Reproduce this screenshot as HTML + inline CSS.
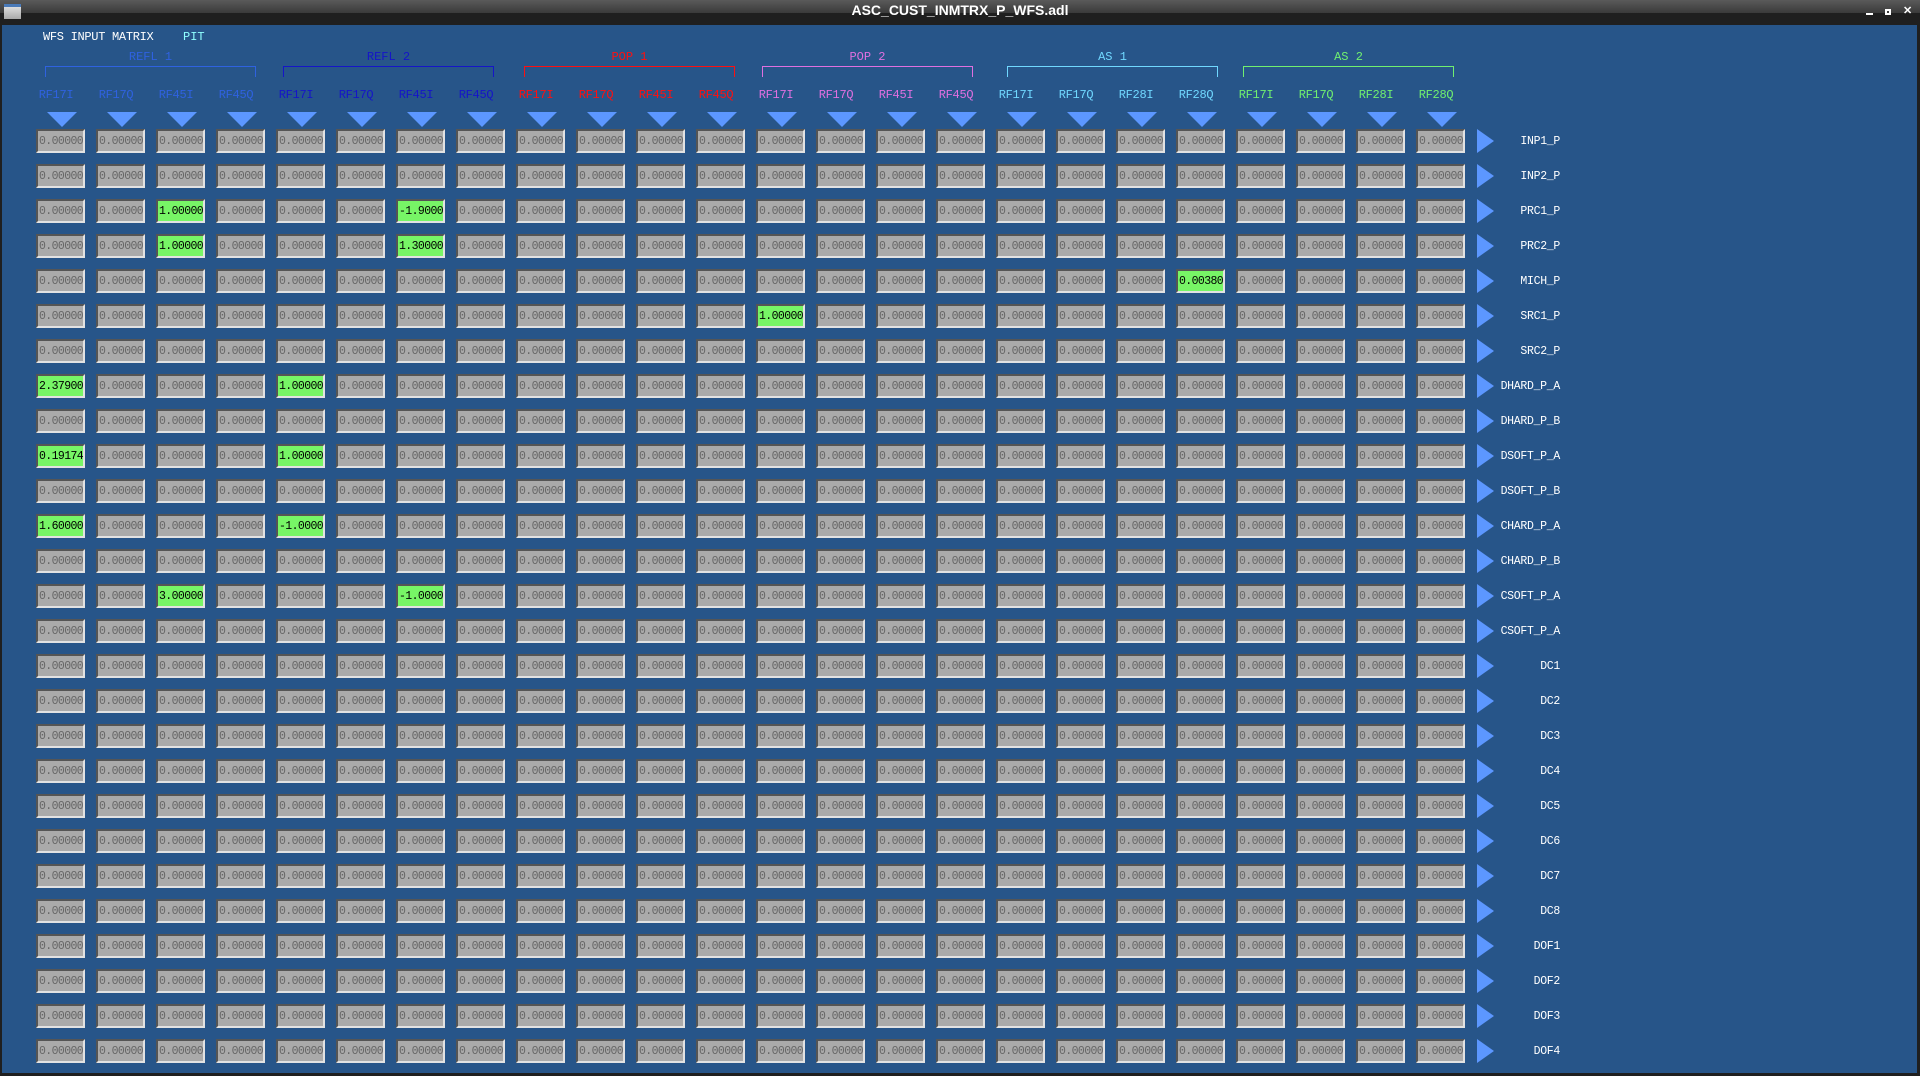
<!DOCTYPE html>
<html><head><meta charset="utf-8"><style>
*{margin:0;padding:0;box-sizing:border-box}
body{width:1920px;height:1076px;background:#1f1f1f;position:relative;overflow:hidden;font-family:"Liberation Mono","DejaVu Sans Mono",monospace;font-size:10px}
#tb{position:absolute;left:0;top:0;width:1920px;height:13px;background:linear-gradient(#5a5a5a,#3a3a3a)}
#tt{position:absolute;left:0;top:2px;width:1920px;text-align:center;color:#fff;font:bold 14px "Liberation Sans",sans-serif}
#ic{position:absolute;left:4px;top:4px;width:17px;height:15px;background:linear-gradient(#4a7ab8 0 3px,#ddd 3px,#aaa)}
.wbt{position:absolute;top:10px;background:#fff}
#bg{position:absolute;left:2px;top:25px;width:1915px;height:1048px;background:#275589}
.t{position:absolute;white-space:nowrap}
.br{position:absolute;top:66px;width:211px;height:11px;border:1px solid;border-bottom:none}
.gl{position:absolute;top:50px;width:211px;text-align:center;font-size:12px}
.cl{position:absolute;top:88px;width:60px;text-align:center;font-size:12px;letter-spacing:-0.3px}
.tri{position:absolute;top:112px;width:0;height:0;border-left:15px solid transparent;border-right:15px solid transparent;border-top:15px solid #5c97ff}
.r{position:absolute;left:36px;height:24px;width:1600px;display:flex;gap:11px}
.r i{display:block;font-style:normal;width:49px;height:24px;background:#aaa;border:2px solid;border-color:#555 #e2e2e2 #e2e2e2 #555;color:#666;padding:3px 0 0 1px;line-height:16px;font-size:11.5px;letter-spacing:-0.6px;flex:none;overflow:hidden;white-space:nowrap}
.r i.g{background:#77f566;color:#000}
.r b{position:absolute;left:1441px;top:0;width:0;height:0;border-top:12px solid transparent;border-bottom:12px solid transparent;border-left:17px solid #5c97ff}
.r u{position:absolute;right:76px;top:6px;text-decoration:none;color:#fff;font-size:11.5px;letter-spacing:-0.3px}
</style></head><body>
<div id="tb"></div><div id="ic"></div>
<div id="tt">ASC_CUST_INMTRX_P_WFS.adl</div>
<div class="wbt" style="left:1866px;top:13px;width:7px;height:2px"></div>
<div class="wbt" style="left:1885px;top:9px;width:6px;height:6px;background:none;border:2px solid #fff;border-top-width:2px"></div>
<div class="t" style="left:1903px;top:4px;color:#fff;font:bold 11px 'Liberation Sans',sans-serif">✕</div>
<div id="bg"></div>
<div class="t" style="left:43px;top:30px;color:#fff;font-size:12px;letter-spacing:-0.3px">WFS INPUT MATRIX</div>
<div class="t" style="left:183px;top:30px;color:#90ffff;font-size:12px">PIT</div>

<div class="gl" style="left:45px;color:#2f62e0">REFL 1</div><div class="br" style="left:45px;color:#2f62e0"></div>
<div class="gl" style="left:283px;color:#1515c8">REFL 2</div><div class="br" style="left:283px;color:#1515c8"></div>
<div class="gl" style="left:524px;color:#ff1010">POP 1</div><div class="br" style="left:524px;color:#ff1010"></div>
<div class="gl" style="left:762px;color:#e070e0">POP 2</div><div class="br" style="left:762px;color:#e070e0"></div>
<div class="gl" style="left:1007px;color:#70d8ff">AS 1</div><div class="br" style="left:1007px;color:#70d8ff"></div>
<div class="gl" style="left:1243px;color:#70f070">AS 2</div><div class="br" style="left:1243px;color:#70f070"></div>

<div class="cl" style="left:26px;color:#2f62e0">RF17I</div><div class="cl" style="left:86px;color:#2f62e0">RF17Q</div><div class="cl" style="left:146px;color:#2f62e0">RF45I</div><div class="cl" style="left:206px;color:#2f62e0">RF45Q</div>
<div class="cl" style="left:266px;color:#1515c8">RF17I</div><div class="cl" style="left:326px;color:#1515c8">RF17Q</div><div class="cl" style="left:386px;color:#1515c8">RF45I</div><div class="cl" style="left:446px;color:#1515c8">RF45Q</div>
<div class="cl" style="left:506px;color:#ff1010">RF17I</div><div class="cl" style="left:566px;color:#ff1010">RF17Q</div><div class="cl" style="left:626px;color:#ff1010">RF45I</div><div class="cl" style="left:686px;color:#ff1010">RF45Q</div>
<div class="cl" style="left:746px;color:#e070e0">RF17I</div><div class="cl" style="left:806px;color:#e070e0">RF17Q</div><div class="cl" style="left:866px;color:#e070e0">RF45I</div><div class="cl" style="left:926px;color:#e070e0">RF45Q</div>
<div class="cl" style="left:986px;color:#70d8ff">RF17I</div><div class="cl" style="left:1046px;color:#70d8ff">RF17Q</div><div class="cl" style="left:1106px;color:#70d8ff">RF28I</div><div class="cl" style="left:1166px;color:#70d8ff">RF28Q</div>
<div class="cl" style="left:1226px;color:#70f070">RF17I</div><div class="cl" style="left:1286px;color:#70f070">RF17Q</div><div class="cl" style="left:1346px;color:#70f070">RF28I</div><div class="cl" style="left:1406px;color:#70f070">RF28Q</div>

<div class="tri" style="left:47px"></div><div class="tri" style="left:107px"></div><div class="tri" style="left:167px"></div><div class="tri" style="left:227px"></div><div class="tri" style="left:287px"></div><div class="tri" style="left:347px"></div><div class="tri" style="left:407px"></div><div class="tri" style="left:467px"></div><div class="tri" style="left:527px"></div><div class="tri" style="left:587px"></div><div class="tri" style="left:647px"></div><div class="tri" style="left:707px"></div><div class="tri" style="left:767px"></div><div class="tri" style="left:827px"></div><div class="tri" style="left:887px"></div><div class="tri" style="left:947px"></div><div class="tri" style="left:1007px"></div><div class="tri" style="left:1067px"></div><div class="tri" style="left:1127px"></div><div class="tri" style="left:1187px"></div><div class="tri" style="left:1247px"></div><div class="tri" style="left:1307px"></div><div class="tri" style="left:1367px"></div><div class="tri" style="left:1427px"></div>

<div class="r" style="top:129px"><i>0.00000</i><i>0.00000</i><i>0.00000</i><i>0.00000</i><i>0.00000</i><i>0.00000</i><i>0.00000</i><i>0.00000</i><i>0.00000</i><i>0.00000</i><i>0.00000</i><i>0.00000</i><i>0.00000</i><i>0.00000</i><i>0.00000</i><i>0.00000</i><i>0.00000</i><i>0.00000</i><i>0.00000</i><i>0.00000</i><i>0.00000</i><i>0.00000</i><i>0.00000</i><i>0.00000</i><b></b><u>INP1_P</u></div>
<div class="r" style="top:164px"><i>0.00000</i><i>0.00000</i><i>0.00000</i><i>0.00000</i><i>0.00000</i><i>0.00000</i><i>0.00000</i><i>0.00000</i><i>0.00000</i><i>0.00000</i><i>0.00000</i><i>0.00000</i><i>0.00000</i><i>0.00000</i><i>0.00000</i><i>0.00000</i><i>0.00000</i><i>0.00000</i><i>0.00000</i><i>0.00000</i><i>0.00000</i><i>0.00000</i><i>0.00000</i><i>0.00000</i><b></b><u>INP2_P</u></div>
<div class="r" style="top:199px"><i>0.00000</i><i>0.00000</i><i class="g">1.00000</i><i>0.00000</i><i>0.00000</i><i>0.00000</i><i class="g">-1.9000</i><i>0.00000</i><i>0.00000</i><i>0.00000</i><i>0.00000</i><i>0.00000</i><i>0.00000</i><i>0.00000</i><i>0.00000</i><i>0.00000</i><i>0.00000</i><i>0.00000</i><i>0.00000</i><i>0.00000</i><i>0.00000</i><i>0.00000</i><i>0.00000</i><i>0.00000</i><b></b><u>PRC1_P</u></div>
<div class="r" style="top:234px"><i>0.00000</i><i>0.00000</i><i class="g">1.00000</i><i>0.00000</i><i>0.00000</i><i>0.00000</i><i class="g">1.30000</i><i>0.00000</i><i>0.00000</i><i>0.00000</i><i>0.00000</i><i>0.00000</i><i>0.00000</i><i>0.00000</i><i>0.00000</i><i>0.00000</i><i>0.00000</i><i>0.00000</i><i>0.00000</i><i>0.00000</i><i>0.00000</i><i>0.00000</i><i>0.00000</i><i>0.00000</i><b></b><u>PRC2_P</u></div>
<div class="r" style="top:269px"><i>0.00000</i><i>0.00000</i><i>0.00000</i><i>0.00000</i><i>0.00000</i><i>0.00000</i><i>0.00000</i><i>0.00000</i><i>0.00000</i><i>0.00000</i><i>0.00000</i><i>0.00000</i><i>0.00000</i><i>0.00000</i><i>0.00000</i><i>0.00000</i><i>0.00000</i><i>0.00000</i><i>0.00000</i><i class="g">0.00380</i><i>0.00000</i><i>0.00000</i><i>0.00000</i><i>0.00000</i><b></b><u>MICH_P</u></div>
<div class="r" style="top:304px"><i>0.00000</i><i>0.00000</i><i>0.00000</i><i>0.00000</i><i>0.00000</i><i>0.00000</i><i>0.00000</i><i>0.00000</i><i>0.00000</i><i>0.00000</i><i>0.00000</i><i>0.00000</i><i class="g">1.00000</i><i>0.00000</i><i>0.00000</i><i>0.00000</i><i>0.00000</i><i>0.00000</i><i>0.00000</i><i>0.00000</i><i>0.00000</i><i>0.00000</i><i>0.00000</i><i>0.00000</i><b></b><u>SRC1_P</u></div>
<div class="r" style="top:339px"><i>0.00000</i><i>0.00000</i><i>0.00000</i><i>0.00000</i><i>0.00000</i><i>0.00000</i><i>0.00000</i><i>0.00000</i><i>0.00000</i><i>0.00000</i><i>0.00000</i><i>0.00000</i><i>0.00000</i><i>0.00000</i><i>0.00000</i><i>0.00000</i><i>0.00000</i><i>0.00000</i><i>0.00000</i><i>0.00000</i><i>0.00000</i><i>0.00000</i><i>0.00000</i><i>0.00000</i><b></b><u>SRC2_P</u></div>
<div class="r" style="top:374px"><i class="g">2.37900</i><i>0.00000</i><i>0.00000</i><i>0.00000</i><i class="g">1.00000</i><i>0.00000</i><i>0.00000</i><i>0.00000</i><i>0.00000</i><i>0.00000</i><i>0.00000</i><i>0.00000</i><i>0.00000</i><i>0.00000</i><i>0.00000</i><i>0.00000</i><i>0.00000</i><i>0.00000</i><i>0.00000</i><i>0.00000</i><i>0.00000</i><i>0.00000</i><i>0.00000</i><i>0.00000</i><b></b><u>DHARD_P_A</u></div>
<div class="r" style="top:409px"><i>0.00000</i><i>0.00000</i><i>0.00000</i><i>0.00000</i><i>0.00000</i><i>0.00000</i><i>0.00000</i><i>0.00000</i><i>0.00000</i><i>0.00000</i><i>0.00000</i><i>0.00000</i><i>0.00000</i><i>0.00000</i><i>0.00000</i><i>0.00000</i><i>0.00000</i><i>0.00000</i><i>0.00000</i><i>0.00000</i><i>0.00000</i><i>0.00000</i><i>0.00000</i><i>0.00000</i><b></b><u>DHARD_P_B</u></div>
<div class="r" style="top:444px"><i class="g">0.19174</i><i>0.00000</i><i>0.00000</i><i>0.00000</i><i class="g">1.00000</i><i>0.00000</i><i>0.00000</i><i>0.00000</i><i>0.00000</i><i>0.00000</i><i>0.00000</i><i>0.00000</i><i>0.00000</i><i>0.00000</i><i>0.00000</i><i>0.00000</i><i>0.00000</i><i>0.00000</i><i>0.00000</i><i>0.00000</i><i>0.00000</i><i>0.00000</i><i>0.00000</i><i>0.00000</i><b></b><u>DSOFT_P_A</u></div>
<div class="r" style="top:479px"><i>0.00000</i><i>0.00000</i><i>0.00000</i><i>0.00000</i><i>0.00000</i><i>0.00000</i><i>0.00000</i><i>0.00000</i><i>0.00000</i><i>0.00000</i><i>0.00000</i><i>0.00000</i><i>0.00000</i><i>0.00000</i><i>0.00000</i><i>0.00000</i><i>0.00000</i><i>0.00000</i><i>0.00000</i><i>0.00000</i><i>0.00000</i><i>0.00000</i><i>0.00000</i><i>0.00000</i><b></b><u>DSOFT_P_B</u></div>
<div class="r" style="top:514px"><i class="g">1.60000</i><i>0.00000</i><i>0.00000</i><i>0.00000</i><i class="g">-1.0000</i><i>0.00000</i><i>0.00000</i><i>0.00000</i><i>0.00000</i><i>0.00000</i><i>0.00000</i><i>0.00000</i><i>0.00000</i><i>0.00000</i><i>0.00000</i><i>0.00000</i><i>0.00000</i><i>0.00000</i><i>0.00000</i><i>0.00000</i><i>0.00000</i><i>0.00000</i><i>0.00000</i><i>0.00000</i><b></b><u>CHARD_P_A</u></div>
<div class="r" style="top:549px"><i>0.00000</i><i>0.00000</i><i>0.00000</i><i>0.00000</i><i>0.00000</i><i>0.00000</i><i>0.00000</i><i>0.00000</i><i>0.00000</i><i>0.00000</i><i>0.00000</i><i>0.00000</i><i>0.00000</i><i>0.00000</i><i>0.00000</i><i>0.00000</i><i>0.00000</i><i>0.00000</i><i>0.00000</i><i>0.00000</i><i>0.00000</i><i>0.00000</i><i>0.00000</i><i>0.00000</i><b></b><u>CHARD_P_B</u></div>
<div class="r" style="top:584px"><i>0.00000</i><i>0.00000</i><i class="g">3.00000</i><i>0.00000</i><i>0.00000</i><i>0.00000</i><i class="g">-1.0000</i><i>0.00000</i><i>0.00000</i><i>0.00000</i><i>0.00000</i><i>0.00000</i><i>0.00000</i><i>0.00000</i><i>0.00000</i><i>0.00000</i><i>0.00000</i><i>0.00000</i><i>0.00000</i><i>0.00000</i><i>0.00000</i><i>0.00000</i><i>0.00000</i><i>0.00000</i><b></b><u>CSOFT_P_A</u></div>
<div class="r" style="top:619px"><i>0.00000</i><i>0.00000</i><i>0.00000</i><i>0.00000</i><i>0.00000</i><i>0.00000</i><i>0.00000</i><i>0.00000</i><i>0.00000</i><i>0.00000</i><i>0.00000</i><i>0.00000</i><i>0.00000</i><i>0.00000</i><i>0.00000</i><i>0.00000</i><i>0.00000</i><i>0.00000</i><i>0.00000</i><i>0.00000</i><i>0.00000</i><i>0.00000</i><i>0.00000</i><i>0.00000</i><b></b><u>CSOFT_P_A</u></div>
<div class="r" style="top:654px"><i>0.00000</i><i>0.00000</i><i>0.00000</i><i>0.00000</i><i>0.00000</i><i>0.00000</i><i>0.00000</i><i>0.00000</i><i>0.00000</i><i>0.00000</i><i>0.00000</i><i>0.00000</i><i>0.00000</i><i>0.00000</i><i>0.00000</i><i>0.00000</i><i>0.00000</i><i>0.00000</i><i>0.00000</i><i>0.00000</i><i>0.00000</i><i>0.00000</i><i>0.00000</i><i>0.00000</i><b></b><u>DC1</u></div>
<div class="r" style="top:689px"><i>0.00000</i><i>0.00000</i><i>0.00000</i><i>0.00000</i><i>0.00000</i><i>0.00000</i><i>0.00000</i><i>0.00000</i><i>0.00000</i><i>0.00000</i><i>0.00000</i><i>0.00000</i><i>0.00000</i><i>0.00000</i><i>0.00000</i><i>0.00000</i><i>0.00000</i><i>0.00000</i><i>0.00000</i><i>0.00000</i><i>0.00000</i><i>0.00000</i><i>0.00000</i><i>0.00000</i><b></b><u>DC2</u></div>
<div class="r" style="top:724px"><i>0.00000</i><i>0.00000</i><i>0.00000</i><i>0.00000</i><i>0.00000</i><i>0.00000</i><i>0.00000</i><i>0.00000</i><i>0.00000</i><i>0.00000</i><i>0.00000</i><i>0.00000</i><i>0.00000</i><i>0.00000</i><i>0.00000</i><i>0.00000</i><i>0.00000</i><i>0.00000</i><i>0.00000</i><i>0.00000</i><i>0.00000</i><i>0.00000</i><i>0.00000</i><i>0.00000</i><b></b><u>DC3</u></div>
<div class="r" style="top:759px"><i>0.00000</i><i>0.00000</i><i>0.00000</i><i>0.00000</i><i>0.00000</i><i>0.00000</i><i>0.00000</i><i>0.00000</i><i>0.00000</i><i>0.00000</i><i>0.00000</i><i>0.00000</i><i>0.00000</i><i>0.00000</i><i>0.00000</i><i>0.00000</i><i>0.00000</i><i>0.00000</i><i>0.00000</i><i>0.00000</i><i>0.00000</i><i>0.00000</i><i>0.00000</i><i>0.00000</i><b></b><u>DC4</u></div>
<div class="r" style="top:794px"><i>0.00000</i><i>0.00000</i><i>0.00000</i><i>0.00000</i><i>0.00000</i><i>0.00000</i><i>0.00000</i><i>0.00000</i><i>0.00000</i><i>0.00000</i><i>0.00000</i><i>0.00000</i><i>0.00000</i><i>0.00000</i><i>0.00000</i><i>0.00000</i><i>0.00000</i><i>0.00000</i><i>0.00000</i><i>0.00000</i><i>0.00000</i><i>0.00000</i><i>0.00000</i><i>0.00000</i><b></b><u>DC5</u></div>
<div class="r" style="top:829px"><i>0.00000</i><i>0.00000</i><i>0.00000</i><i>0.00000</i><i>0.00000</i><i>0.00000</i><i>0.00000</i><i>0.00000</i><i>0.00000</i><i>0.00000</i><i>0.00000</i><i>0.00000</i><i>0.00000</i><i>0.00000</i><i>0.00000</i><i>0.00000</i><i>0.00000</i><i>0.00000</i><i>0.00000</i><i>0.00000</i><i>0.00000</i><i>0.00000</i><i>0.00000</i><i>0.00000</i><b></b><u>DC6</u></div>
<div class="r" style="top:864px"><i>0.00000</i><i>0.00000</i><i>0.00000</i><i>0.00000</i><i>0.00000</i><i>0.00000</i><i>0.00000</i><i>0.00000</i><i>0.00000</i><i>0.00000</i><i>0.00000</i><i>0.00000</i><i>0.00000</i><i>0.00000</i><i>0.00000</i><i>0.00000</i><i>0.00000</i><i>0.00000</i><i>0.00000</i><i>0.00000</i><i>0.00000</i><i>0.00000</i><i>0.00000</i><i>0.00000</i><b></b><u>DC7</u></div>
<div class="r" style="top:899px"><i>0.00000</i><i>0.00000</i><i>0.00000</i><i>0.00000</i><i>0.00000</i><i>0.00000</i><i>0.00000</i><i>0.00000</i><i>0.00000</i><i>0.00000</i><i>0.00000</i><i>0.00000</i><i>0.00000</i><i>0.00000</i><i>0.00000</i><i>0.00000</i><i>0.00000</i><i>0.00000</i><i>0.00000</i><i>0.00000</i><i>0.00000</i><i>0.00000</i><i>0.00000</i><i>0.00000</i><b></b><u>DC8</u></div>
<div class="r" style="top:934px"><i>0.00000</i><i>0.00000</i><i>0.00000</i><i>0.00000</i><i>0.00000</i><i>0.00000</i><i>0.00000</i><i>0.00000</i><i>0.00000</i><i>0.00000</i><i>0.00000</i><i>0.00000</i><i>0.00000</i><i>0.00000</i><i>0.00000</i><i>0.00000</i><i>0.00000</i><i>0.00000</i><i>0.00000</i><i>0.00000</i><i>0.00000</i><i>0.00000</i><i>0.00000</i><i>0.00000</i><b></b><u>DOF1</u></div>
<div class="r" style="top:969px"><i>0.00000</i><i>0.00000</i><i>0.00000</i><i>0.00000</i><i>0.00000</i><i>0.00000</i><i>0.00000</i><i>0.00000</i><i>0.00000</i><i>0.00000</i><i>0.00000</i><i>0.00000</i><i>0.00000</i><i>0.00000</i><i>0.00000</i><i>0.00000</i><i>0.00000</i><i>0.00000</i><i>0.00000</i><i>0.00000</i><i>0.00000</i><i>0.00000</i><i>0.00000</i><i>0.00000</i><b></b><u>DOF2</u></div>
<div class="r" style="top:1004px"><i>0.00000</i><i>0.00000</i><i>0.00000</i><i>0.00000</i><i>0.00000</i><i>0.00000</i><i>0.00000</i><i>0.00000</i><i>0.00000</i><i>0.00000</i><i>0.00000</i><i>0.00000</i><i>0.00000</i><i>0.00000</i><i>0.00000</i><i>0.00000</i><i>0.00000</i><i>0.00000</i><i>0.00000</i><i>0.00000</i><i>0.00000</i><i>0.00000</i><i>0.00000</i><i>0.00000</i><b></b><u>DOF3</u></div>
<div class="r" style="top:1039px"><i>0.00000</i><i>0.00000</i><i>0.00000</i><i>0.00000</i><i>0.00000</i><i>0.00000</i><i>0.00000</i><i>0.00000</i><i>0.00000</i><i>0.00000</i><i>0.00000</i><i>0.00000</i><i>0.00000</i><i>0.00000</i><i>0.00000</i><i>0.00000</i><i>0.00000</i><i>0.00000</i><i>0.00000</i><i>0.00000</i><i>0.00000</i><i>0.00000</i><i>0.00000</i><i>0.00000</i><b></b><u>DOF4</u></div>
</body></html>
